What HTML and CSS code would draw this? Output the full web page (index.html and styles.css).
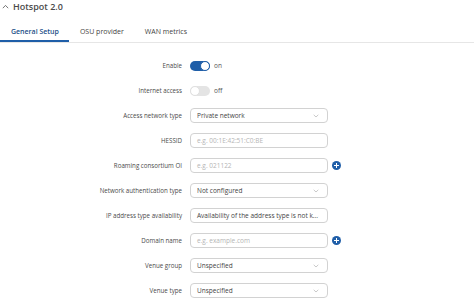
FILE: index.html
```html
<!DOCTYPE html>
<html>
<head>
<meta charset="utf-8">
<link rel="stylesheet" href="styles.css">
</head>
<body>
<div class="page">
  <div class="section-title">
    <svg class="caret" width="7" height="5" viewBox="0 0 7 5"><path d="M0.8 4.2 L3.5 1.4 L6.2 4.2" fill="none" stroke="#666" stroke-width="0.9"/></svg>
    <span>Hotspot 2.0</span>
  </div>
  <div class="tabs">
    <div class="tab active">General Setup</div>
    <div class="tab">OSU provider</div>
    <div class="tab">WAN metrics</div>
  </div>
  <div class="form">
    <div class="row">
      <div class="label">Enable</div>
      <div class="ctrl"><span class="toggle on"><span class="knob"></span></span><span class="state">on</span></div>
    </div>
    <div class="row">
      <div class="label">Internet access</div>
      <div class="ctrl"><span class="toggle"><span class="knob"></span></span><span class="state">off</span></div>
    </div>
    <div class="row">
      <div class="label">Access network type</div>
      <div class="ctrl"><div class="select"><span class="val">Private network</span><svg class="chev" width="6" height="4" viewBox="0 0 6 4"><path d="M0.7 0.8 L3 3 L5.3 0.8" fill="none" stroke="#bbb" stroke-width="0.8"/></svg></div></div>
    </div>
    <div class="row">
      <div class="label">HESSID</div>
      <div class="ctrl"><div class="input"><span class="ph">e.g. 00:1E:42:51:C0:BE</span></div></div>
    </div>
    <div class="row">
      <div class="label">Roaming consortium OI</div>
      <div class="ctrl"><div class="input"><span class="ph">e.g. 021122</span></div><span class="plus"></span></div>
    </div>
    <div class="row">
      <div class="label">Network authentication type</div>
      <div class="ctrl"><div class="select"><span class="val">Not configured</span><svg class="chev" width="6" height="4" viewBox="0 0 6 4"><path d="M0.7 0.8 L3 3 L5.3 0.8" fill="none" stroke="#bbb" stroke-width="0.8"/></svg></div></div>
    </div>
    <div class="row">
      <div class="label">IP address type availability</div>
      <div class="ctrl"><div class="select"><span class="val">Availability of the address type is not k...</span><svg class="chev" width="6" height="4" viewBox="0 0 6 4"><path d="M0.7 0.8 L3 3 L5.3 0.8" fill="none" stroke="#bbb" stroke-width="0.8"/></svg></div></div>
    </div>
    <div class="row">
      <div class="label">Domain name</div>
      <div class="ctrl"><div class="input"><span class="ph">e.g. example.com</span></div><span class="plus"></span></div>
    </div>
    <div class="row">
      <div class="label">Venue group</div>
      <div class="ctrl"><div class="select"><span class="val">Unspecified</span><svg class="chev" width="6" height="4" viewBox="0 0 6 4"><path d="M0.7 0.8 L3 3 L5.3 0.8" fill="none" stroke="#bbb" stroke-width="0.8"/></svg></div></div>
    </div>
    <div class="row">
      <div class="label">Venue type</div>
      <div class="ctrl"><div class="select"><span class="val">Unspecified</span><svg class="chev" width="6" height="4" viewBox="0 0 6 4"><path d="M0.7 0.8 L3 3 L5.3 0.8" fill="none" stroke="#bbb" stroke-width="0.8"/></svg></div></div>
    </div>
  </div>
</div>
</body>
</html>
```
FILE: styles.css
```css
html, body {
  margin: 0;
  padding: 0;
  background: #fff;
}
body {
  font-family: "Open Sans", "Noto Sans", sans-serif;
  color: #444;
  width: 474px;
  height: 299px;
  overflow: hidden;
}
.section-title {
  display: flex;
  align-items: center;
  gap: 4px;
  height: 13px;
  padding-left: 2px;
  font-size: 9px;
  font-weight: 600;
  color: #4a4a4a;
}
.caret {
  display: block;
}
.tabs {
  display: flex;
  margin-top: 13px;
  border-bottom: 1px solid #e6e6e6;
}
.tab {
  height: 16px;
  padding: 0 10px 0 11px;
  font-size: 7px;
  line-height: 12px;
  color: #444;
}
.tab.active {
  color: #1c4f87;
  font-weight: 600;
  border-bottom: 2px solid #1f5ea8;
  height: 14px;
}
.form {
  display: flex;
  flex-direction: column;
  gap: 10px;
  padding-top: 15px;
}
.row {
  display: flex;
  align-items: center;
  height: 15px;
}
.label {
  width: 182px;
  text-align: right;
  font-size: 6.2px;
  color: #4a4a4a;
  padding-right: 8px;
  box-sizing: content-box;
}
.ctrl {
  display: flex;
  align-items: center;
}
.toggle {
  position: relative;
  width: 20px;
  height: 10px;
  border-radius: 5px;
  background: #e4e4e4;
  display: inline-block;
}
.toggle.on {
  background: #1f5ea8;
}
.knob {
  position: absolute;
  top: 0;
  left: 0;
  width: 10px;
  height: 10px;
  box-sizing: border-box;
  border-radius: 50%;
  background: #fff;
  border: 1px solid #e0e0e0;
}
.toggle.on .knob {
  left: 10px;
  border-color: #1f5ea8;
}
.state {
  margin-left: 4px;
  font-size: 6.5px;
  color: #555;
}
.select, .input {
  width: 138px;
  height: 15px;
  box-sizing: border-box;
  border: 1px solid #d2d2d2;
  border-radius: 4px;
  display: flex;
  align-items: center;
  justify-content: space-between;
  padding: 0 8px 0 6px;
  font-size: 6.5px;
}
.val {
  color: #444;
  white-space: nowrap;
}
.ph {
  color: #b5b5b5;
}
.chev {
  display: block;
}
.plus {
  position: relative;
  margin-left: 4px;
  width: 9px;
  height: 9px;
  border-radius: 50%;
  background: #1f5ea8;
}
.plus::before, .plus::after {
  content: "";
  position: absolute;
  background: #fff;
  left: 4px;
  top: 2px;
  width: 1px;
  height: 5px;
}
.plus::after {
  left: 2px;
  top: 4px;
  width: 5px;
  height: 1px;
}
```
